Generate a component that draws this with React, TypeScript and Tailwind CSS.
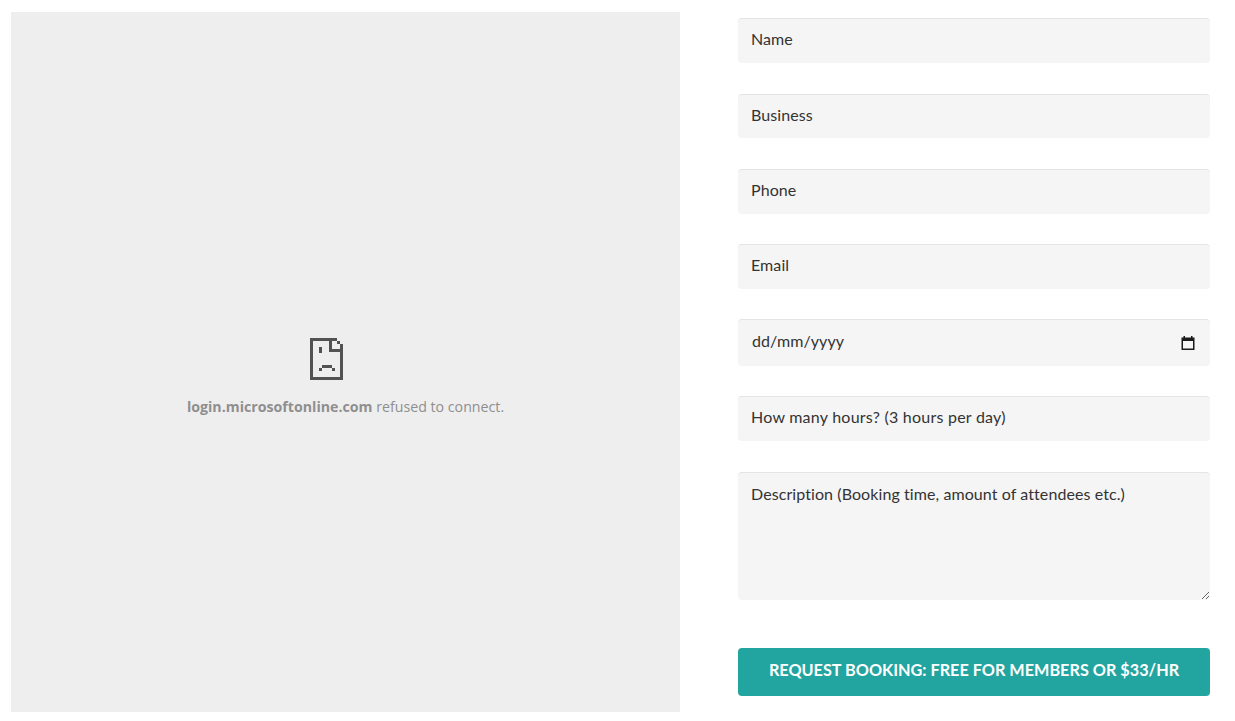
const fieldClass =
  "block w-full h-[45px] rounded-[4px] border-t border-[#e4e4e4] bg-[#f5f5f5] px-[13px] pb-[5px] text-[16px] tracking-[0.085px] text-[#333] outline-none placeholder:text-[#333] placeholder:opacity-100";

function SadPage() {
  return (
    <svg width="33" height="42" viewBox="0 0 33 42" fill="#525252" className="mr-[38px]">
      <rect x="0" y="0" width="3" height="42" />
      <rect x="0" y="0" width="27" height="3" />
      <rect x="0" y="39" width="33" height="3" />
      <rect x="30" y="6" width="3" height="36" />
      <rect x="27" y="3" width="3" height="3" />
      <rect x="19" y="0" width="3" height="14" />
      <rect x="19" y="11" width="14" height="3" />
      <rect x="9" y="9" width="3" height="6" />
      <rect x="12" y="27" width="10" height="3" />
      <rect x="9" y="30" width="3" height="3" />
      <rect x="22" y="30" width="3" height="3" />
    </svg>
  );
}

function CalendarGlyph() {
  return (
    <svg
      width="14"
      height="14"
      viewBox="0 0 14 14"
      fill="#1a1a1a"
      className="absolute right-[15px] top-[17px]"
    >
      <rect x="2.5" y="0" width="1.5" height="2" />
      <rect x="10" y="0" width="1.5" height="2" />
      <path d="M0.5 1.5h13v12.5h-13zM2 5v7.5h10V5z" fillRule="evenodd" />
    </svg>
  );
}

export default function App() {
  return (
    <div className="flex h-[721px] w-[1235px] overflow-hidden bg-white font-['Lato','Noto_Sans',sans-serif]">
      <div className="ml-[11px] mt-[12px] flex h-[700px] w-[669px] flex-col items-center bg-[#eeeeee] pt-[326px]">
        <SadPage />
        <p className="mt-[17px] font-['Open_Sans',sans-serif] text-[14.2px] leading-[20px] text-[#8f8f8f]">
          <span className="font-bold">login.microsoftonline.com</span> refused to connect.
        </p>
      </div>

      <form className="ml-[58px] flex w-[472px] flex-col pt-[18px]">
        <input className={fieldClass} placeholder="Name" />
        <input className={`${fieldClass} mt-[31px] !h-[44px]`} placeholder="Business" />
        <input className={`${fieldClass} mt-[31px]`} placeholder="Phone" />
        <input className={`${fieldClass} mt-[30px]`} placeholder="Email" />
        <div className="relative mt-[30px]">
          <input className={`${fieldClass} !h-[47px] !pl-[14px]`} placeholder="dd/mm/yyyy" />
          <CalendarGlyph />
        </div>
        <input
          className={`${fieldClass} mt-[30px] !tracking-[0.235px]`}
          placeholder="How many hours? (3 hours per day)"
        />
        <textarea
          className={`${fieldClass} mt-[31px] !h-[128px] pt-[9px]`}
          placeholder="Description (Booking time, amount of attendees etc.)"
        />
        <button
          type="button"
          className="mt-[48px] h-[48px] w-full rounded-[4px] bg-[#22a5a0] pb-[3px] text-[16.25px] font-bold text-white"
        >
          REQUEST BOOKING: FREE FOR MEMBERS OR $33/HR
        </button>
      </form>
    </div>
  );
}
